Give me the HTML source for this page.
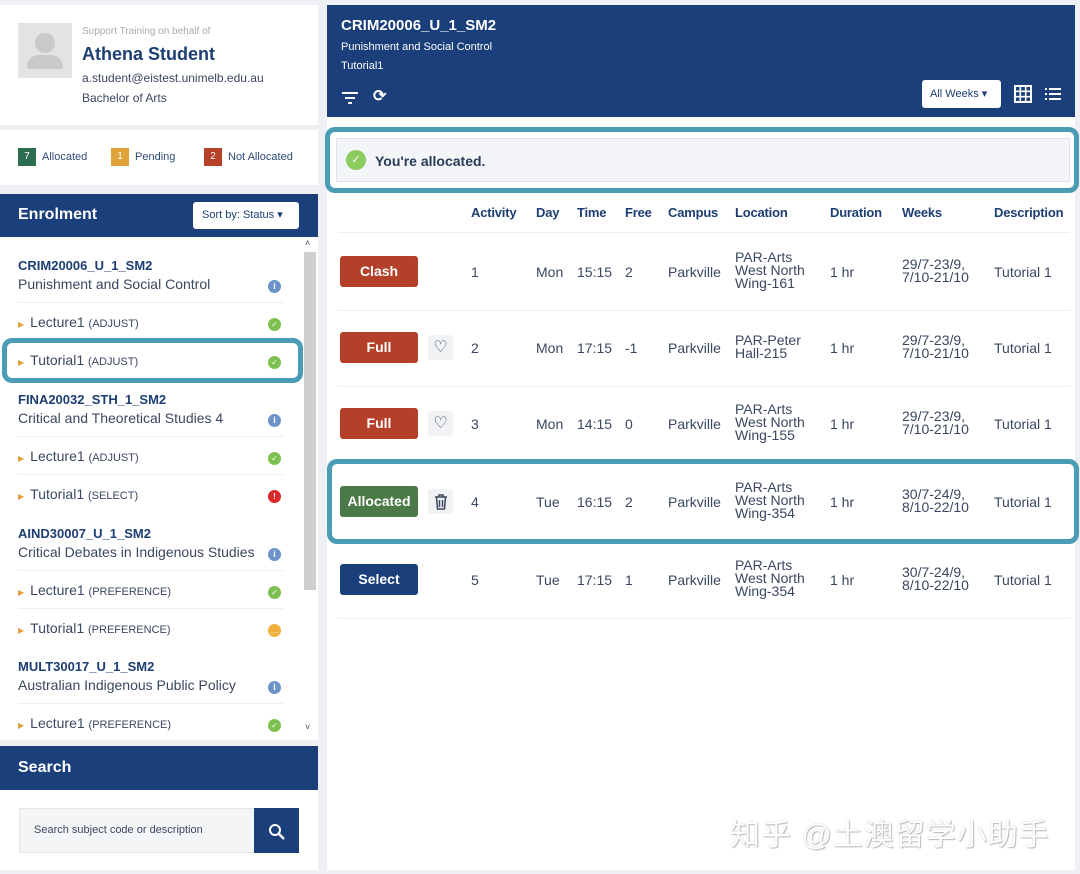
<!DOCTYPE html><html><head><meta charset="utf-8"><style>
*{box-sizing:border-box;margin:0;padding:0}
body{width:1080px;height:874px;background:#eef0f3;font-family:"Liberation Sans",sans-serif;color:#3a4760;position:relative;overflow:hidden;font-size:13px}
.a{position:absolute;white-space:nowrap}
.w{background:#fff}
.nav{background:#1b3f7a;color:#fff}
.cnt{display:inline-block;width:18px;height:18px;color:#fff;font-size:10px;text-align:center;line-height:18px;vertical-align:middle;margin-right:6px}
.ck{width:13px;height:13px;border-radius:50%;background:#7cc04f;color:#fff;font-size:8px;text-align:center;line-height:13px}
.info{width:13px;height:13px;border-radius:50%;background:#6b93c8;color:#fff;font-size:9px;text-align:center;line-height:13px;font-weight:bold}
.sep{position:absolute;height:1px;background:#eceef1}
.btn{position:absolute;left:340px;width:78px;height:31px;border-radius:3px;color:#fff;font-weight:bold;font-size:14px;text-align:center;line-height:31px}
.hb{position:absolute;left:428px;width:25px;height:25px;background:#f1f2f4;border-radius:3px;text-align:center;line-height:25px;font-size:16px;color:#3a4760}
.hl{position:absolute;border:5px solid #4b9db6;border-radius:10px}
.tri{color:#e0a040;font-size:8px;margin-right:6px}
.sm{font-size:11px}
.th span{position:absolute}
</style></head><body>
<div class="a w" style="left:0;top:5px;width:318px;height:120px"></div>
<div class="a" style="left:18px;top:23px;width:54px;height:55px;background:#e3e3e3"></div>
<div class="a" style="left:35px;top:33px;width:20px;height:20px;border-radius:50%;background:#c9c9c9"></div>
<div class="a" style="left:27px;top:55px;width:36px;height:14px;border-radius:12px 12px 2px 2px;background:#c9c9c9"></div>
<div class="a" style="left:82px;top:26px;font-size:10px;color:#a5aab3">Support Training on behalf of</div>
<div class="a" style="left:82px;top:44px;font-size:18px;font-weight:bold;color:#1d3e73">Athena Student</div>
<div class="a" style="left:82px;top:71px;font-size:12px">a.student@eistest.unimelb.edu.au</div>
<div class="a" style="left:82px;top:91px;font-size:12px">Bachelor of Arts</div>
<div class="a w" style="left:0;top:130px;width:318px;height:55px"></div>
<div class="a" style="left:18px;top:148px;font-size:11px;color:#2f4a78"><span class="cnt" style="background:#2e6e50">7</span>Allocated</div>
<div class="a" style="left:111px;top:148px;font-size:11px;color:#2f4a78"><span class="cnt" style="background:#e0a33a">1</span>Pending</div>
<div class="a" style="left:204px;top:148px;font-size:11px;color:#2f4a78"><span class="cnt" style="background:#b8412a">2</span>Not Allocated</div>
<div class="a nav" style="left:0;top:194px;width:318px;height:43px"></div>
<div class="a" style="left:18px;top:206px;font-size:16px;font-weight:bold;color:#fff">Enrolment</div>
<div class="a w" style="left:193px;top:202px;width:106px;height:27px;border-radius:3px;font-size:11px;color:#1d3e73;line-height:27px;padding-left:9px">Sort by: Status ▾</div>
<div class="a w" style="left:0;top:237px;width:318px;height:503px"></div>
<div class="a" style="left:304px;top:252px;width:12px;height:338px;background:#cfcfd1"></div>
<div class="a" style="left:305px;top:238px;font-size:9px">˄</div>
<div class="a" style="left:305px;top:722px;font-size:9px">˅</div>

<div class="a" style="left:18px;top:258px;font-weight:bold;color:#1d3e73">CRIM20006_U_1_SM2</div>
<div class="a" style="left:18px;top:276px;font-size:14px">Punishment and Social Control</div>
<div class="a info" style="left:268px;top:280px">i</div>
<div class="sep" style="left:18px;top:302px;width:265px"></div>
<div class="a" style="left:18px;top:314px;font-size:14px"><span class="tri">▶</span>Lecture1 <span class="sm">(ADJUST)</span></div>
<div class="a ck" style="left:268px;top:318px">✓</div>
<div class="a" style="left:18px;top:352px;font-size:14px"><span class="tri">▶</span>Tutorial1 <span class="sm">(ADJUST)</span></div>
<div class="a ck" style="left:268px;top:356px">✓</div>
<div class="a" style="left:18px;top:392px;font-weight:bold;color:#1d3e73">FINA20032_STH_1_SM2</div>
<div class="a" style="left:18px;top:410px;font-size:14px">Critical and Theoretical Studies 4</div>
<div class="a info" style="left:268px;top:414px">i</div>
<div class="sep" style="left:18px;top:436px;width:265px"></div>
<div class="a" style="left:18px;top:448px;font-size:14px"><span class="tri">▶</span>Lecture1 <span class="sm">(ADJUST)</span></div>
<div class="a ck" style="left:268px;top:452px">✓</div>
<div class="sep" style="left:18px;top:474px;width:265px"></div>
<div class="a" style="left:18px;top:486px;font-size:14px"><span class="tri">▶</span>Tutorial1 <span class="sm">(SELECT)</span></div>
<div class="a ck" style="left:268px;top:490px;background:#d9292b;font-weight:bold">!</div>
<div class="a" style="left:18px;top:526px;font-weight:bold;color:#1d3e73">AIND30007_U_1_SM2</div>
<div class="a" style="left:18px;top:544px;font-size:14px">Critical Debates in Indigenous Studies</div>
<div class="a info" style="left:268px;top:548px">i</div>
<div class="sep" style="left:18px;top:570px;width:265px"></div>
<div class="a" style="left:18px;top:582px;font-size:14px"><span class="tri">▶</span>Lecture1 <span class="sm">(PREFERENCE)</span></div>
<div class="a ck" style="left:268px;top:586px">✓</div>
<div class="sep" style="left:18px;top:608px;width:265px"></div>
<div class="a" style="left:18px;top:620px;font-size:14px"><span class="tri">▶</span>Tutorial1 <span class="sm">(PREFERENCE)</span></div>
<div class="a ck" style="left:268px;top:624px;background:#f0b040">…</div>
<div class="a" style="left:18px;top:659px;font-weight:bold;color:#1d3e73">MULT30017_U_1_SM2</div>
<div class="a" style="left:18px;top:677px;font-size:14px">Australian Indigenous Public Policy</div>
<div class="a info" style="left:268px;top:681px">i</div>
<div class="sep" style="left:18px;top:703px;width:265px"></div>
<div class="a" style="left:18px;top:715px;font-size:14px"><span class="tri">▶</span>Lecture1 <span class="sm">(PREFERENCE)</span></div>
<div class="a ck" style="left:268px;top:719px">✓</div>
<div class="hl" style="left:2px;top:338px;width:301px;height:45px"></div>

<div class="a nav" style="left:0;top:746px;width:318px;height:44px"></div>
<div class="a" style="left:18px;top:759px;font-size:16px;font-weight:bold;color:#fff">Search</div>
<div class="a w" style="left:0;top:790px;width:318px;height:80px"></div>
<div class="a" style="left:19px;top:808px;width:236px;height:45px;background:#f4f5f7;border:1px solid #e3e5e8;font-size:11px;line-height:43px;padding-left:14px">Search subject code or description</div>
<div class="a nav" style="left:254px;top:808px;width:45px;height:45px;text-align:center;line-height:45px">
<svg width="18" height="18" viewBox="0 0 18 18" style="vertical-align:middle"><circle cx="7" cy="7" r="5" fill="none" stroke="#fff" stroke-width="2"/><path d="M11 11l5 5" stroke="#fff" stroke-width="2.4"/></svg></div>

<div class="a w" style="left:327px;top:5px;width:748px;height:865px"></div>
<div class="a nav" style="left:327px;top:5px;width:748px;height:112px"></div>
<div class="a" style="left:341px;top:17px;font-size:15px;font-weight:bold;color:#fff">CRIM20006_U_1_SM2</div>
<div class="a" style="left:341px;top:41px;font-size:11px;color:#fff">Punishment and Social Control</div>
<div class="a" style="left:341px;top:60px;font-size:11px;color:#fff">Tutorial1</div>
<svg class="a" style="left:341px;top:90px" width="18" height="16"><path d="M1 3h16M4 8h10M7 13h4" stroke="#fff" stroke-width="2"/></svg>
<div class="a" style="left:373px;top:86px;font-size:16px;color:#fff;font-weight:bold">⟳</div>
<div class="a w" style="left:922px;top:80px;width:79px;height:28px;border-radius:3px;font-size:11px;color:#1d3e73;line-height:28px;padding-left:8px">All Weeks ▾</div>
<svg class="a" style="left:1014px;top:85px" width="18" height="18"><rect x="1" y="1" width="16" height="16" fill="none" stroke="#fff" stroke-width="2"/><path d="M6.3 1v16M11.7 1v16M1 6.3h16M1 11.7h16" stroke="#fff" stroke-width="1.6"/></svg>
<svg class="a" style="left:1044px;top:87px" width="18" height="14"><path d="M1 2h2M1 7h2M1 12h2M5 2h12M5 7h12M5 12h12" stroke="#fff" stroke-width="2"/></svg>

<div class="a" style="left:336px;top:138px;width:734px;height:44px;background:#f3f5f9;border:1px solid #dfe3ea"></div>
<div class="a" style="left:346px;top:150px;width:20px;height:20px;border-radius:50%;background:#8ccc5e;color:#fff;font-size:11px;text-align:center;line-height:20px">✓</div>
<div class="a" style="left:375px;top:153px;font-size:14px;font-weight:bold;color:#2a3a57">You're allocated.</div>
<div class="hl" style="left:325px;top:127px;width:754px;height:66px"></div>

<div class="a th" style="left:0;top:205px;font-size:13px;font-weight:bold;color:#1d3e73;width:1080px;letter-spacing:-0.2px">
<span style="left:471px">Activity</span><span style="left:536px">Day</span><span style="left:577px">Time</span><span style="left:625px">Free</span><span style="left:668px">Campus</span><span style="left:735px">Location</span><span style="left:830px">Duration</span><span style="left:902px">Weeks</span><span style="left:994px">Description</span></div>
<div class="sep" style="left:338px;top:232px;width:732px"></div>
<div class="sep" style="left:338px;top:310px;width:732px"></div>
<div class="sep" style="left:338px;top:386px;width:732px"></div>
<div class="sep" style="left:338px;top:462px;width:732px"></div>
<div class="sep" style="left:338px;top:618px;width:732px"></div>

<div class="btn" style="top:256px;background:#b5402a">Clash</div>
<div class="btn" style="top:332px;background:#b5402a">Full</div>
<div class="hb" style="top:335px">♡</div>
<div class="btn" style="top:408px;background:#b5402a">Full</div>
<div class="hb" style="top:411px">♡</div>
<div class="btn" style="top:486px;background:#4b7a48">Allocated</div>
<div class="hb" style="top:489px"><svg width="14" height="16" viewBox="0 0 14 16" style="vertical-align:middle"><path d="M1 3h12M5 3V1h4v2M2.5 3l1 12h7l1-12M5.5 6v7M8.5 6v7" fill="none" stroke="#3a4760" stroke-width="1.5"/></svg></div>
<div class="btn" style="top:564px;background:#1b3f7a">Select</div>

<div style="font-size:14px">
<div class="a" style="left:471px;top:264px">1</div><div class="a" style="left:536px;top:264px">Mon</div><div class="a" style="left:577px;top:264px">15:15</div><div class="a" style="left:625px;top:264px">2</div><div class="a" style="left:668px;top:264px">Parkville</div>
<div class="a" style="left:735px;top:251px;line-height:13px">PAR-Arts<br>West North<br>Wing-161</div><div class="a" style="left:830px;top:264px">1 hr</div><div class="a" style="left:902px;top:258px;line-height:13px">29/7-23/9,<br>7/10-21/10</div><div class="a" style="left:994px;top:264px">Tutorial 1</div>

<div class="a" style="left:471px;top:340px">2</div><div class="a" style="left:536px;top:340px">Mon</div><div class="a" style="left:577px;top:340px">17:15</div><div class="a" style="left:625px;top:340px">-1</div><div class="a" style="left:668px;top:340px">Parkville</div>
<div class="a" style="left:735px;top:334px;line-height:13px">PAR-Peter<br>Hall-215</div><div class="a" style="left:830px;top:340px">1 hr</div><div class="a" style="left:902px;top:334px;line-height:13px">29/7-23/9,<br>7/10-21/10</div><div class="a" style="left:994px;top:340px">Tutorial 1</div>

<div class="a" style="left:471px;top:416px">3</div><div class="a" style="left:536px;top:416px">Mon</div><div class="a" style="left:577px;top:416px">14:15</div><div class="a" style="left:625px;top:416px">0</div><div class="a" style="left:668px;top:416px">Parkville</div>
<div class="a" style="left:735px;top:403px;line-height:13px">PAR-Arts<br>West North<br>Wing-155</div><div class="a" style="left:830px;top:416px">1 hr</div><div class="a" style="left:902px;top:410px;line-height:13px">29/7-23/9,<br>7/10-21/10</div><div class="a" style="left:994px;top:416px">Tutorial 1</div>

<div class="a" style="left:471px;top:494px">4</div><div class="a" style="left:536px;top:494px">Tue</div><div class="a" style="left:577px;top:494px">16:15</div><div class="a" style="left:625px;top:494px">2</div><div class="a" style="left:668px;top:494px">Parkville</div>
<div class="a" style="left:735px;top:481px;line-height:13px">PAR-Arts<br>West North<br>Wing-354</div><div class="a" style="left:830px;top:494px">1 hr</div><div class="a" style="left:902px;top:488px;line-height:13px">30/7-24/9,<br>8/10-22/10</div><div class="a" style="left:994px;top:494px">Tutorial 1</div>

<div class="a" style="left:471px;top:572px">5</div><div class="a" style="left:536px;top:572px">Tue</div><div class="a" style="left:577px;top:572px">17:15</div><div class="a" style="left:625px;top:572px">1</div><div class="a" style="left:668px;top:572px">Parkville</div>
<div class="a" style="left:735px;top:559px;line-height:13px">PAR-Arts<br>West North<br>Wing-354</div><div class="a" style="left:830px;top:572px">1 hr</div><div class="a" style="left:902px;top:566px;line-height:13px">30/7-24/9,<br>8/10-22/10</div><div class="a" style="left:994px;top:572px">Tutorial 1</div>
</div>
<div class="hl" style="left:327px;top:459px;width:752px;height:85px"></div>

<div class="a" style="left:730px;top:810px;font-size:30px;color:#fff;letter-spacing:1px;font-family:'Liberation Sans','Noto Sans CJK SC',sans-serif;text-shadow:0 0 1px #aaa,1px 1px 1px #bbb">知乎 @土澳留学小助手</div>
</body></html>
